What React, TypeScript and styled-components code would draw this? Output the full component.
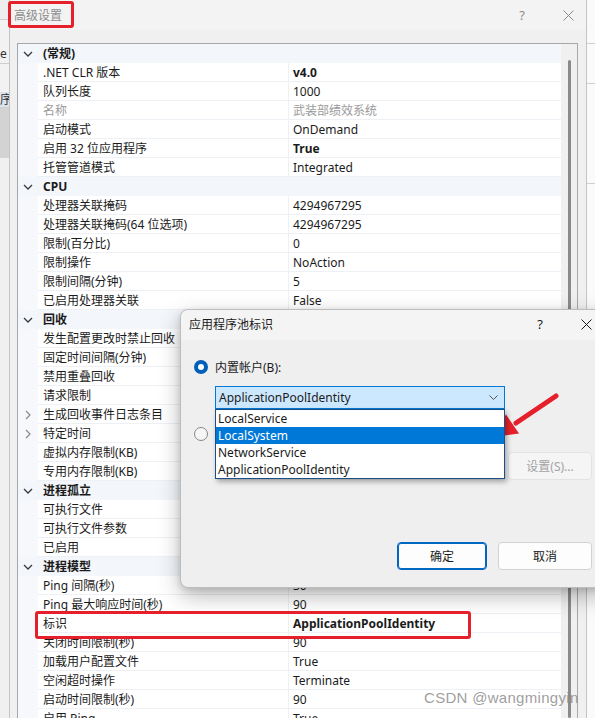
import React from "react";
import styled, { createGlobalStyle, css } from "styled-components";

const FONT = `"Noto Sans", "Noto Sans CJK SC", sans-serif`;

const GlobalStyle = createGlobalStyle`
  html, body { margin: 0; padding: 0; background: #f0f0f0; }
  body { width: 595px; height: 718px; overflow: hidden; font-family: ${FONT}; }
  * { box-sizing: border-box; }
`;

type Row =
  | { kind: "cat"; label: string }
  | { kind: "prop"; name: string; value: string; bold?: boolean; dim?: boolean; expand?: boolean };

/* values of rows lying under the dialog are not visible in the screenshot */
const rows: Row[] = [
  { kind: "cat", label: "(常规)" },
  { kind: "prop", name: ".NET CLR 版本", value: "v4.0", bold: true },
  { kind: "prop", name: "队列长度", value: "1000" },
  { kind: "prop", name: "名称", value: "武装部绩效系统", dim: true },
  { kind: "prop", name: "启动模式", value: "OnDemand" },
  { kind: "prop", name: "启用 32 位应用程序", value: "True", bold: true },
  { kind: "prop", name: "托管管道模式", value: "Integrated" },
  { kind: "cat", label: "CPU" },
  { kind: "prop", name: "处理器关联掩码", value: "4294967295" },
  { kind: "prop", name: "处理器关联掩码(64 位选项)", value: "4294967295" },
  { kind: "prop", name: "限制(百分比)", value: "0" },
  { kind: "prop", name: "限制操作", value: "NoAction" },
  { kind: "prop", name: "限制间隔(分钟)", value: "5" },
  { kind: "prop", name: "已启用处理器关联", value: "False" },
  { kind: "cat", label: "回收" },
  { kind: "prop", name: "发生配置更改时禁止回收", value: "" },
  { kind: "prop", name: "固定时间间隔(分钟)", value: "" },
  { kind: "prop", name: "禁用重叠回收", value: "" },
  { kind: "prop", name: "请求限制", value: "" },
  { kind: "prop", name: "生成回收事件日志条目", value: "", expand: true },
  { kind: "prop", name: "特定时间", value: "", expand: true },
  { kind: "prop", name: "虚拟内存限制(KB)", value: "" },
  { kind: "prop", name: "专用内存限制(KB)", value: "" },
  { kind: "cat", label: "进程孤立" },
  { kind: "prop", name: "可执行文件", value: "" },
  { kind: "prop", name: "可执行文件参数", value: "" },
  { kind: "prop", name: "已启用", value: "" },
  { kind: "cat", label: "进程模型" },
  { kind: "prop", name: "Ping 间隔(秒)", value: "30" },
  { kind: "prop", name: "Ping 最大响应时间(秒)", value: "90" },
  { kind: "prop", name: "标识", value: "ApplicationPoolIdentity", bold: true },
  { kind: "prop", name: "关闭时间限制(秒)", value: "90" },
  { kind: "prop", name: "加载用户配置文件", value: "True" },
  { kind: "prop", name: "空闲超时操作", value: "Terminate" },
  { kind: "prop", name: "启动时间限制(秒)", value: "90" },
  { kind: "prop", name: "启用 Ping", value: "True" },
];

/* ---------- page ---------- */

const Screen = styled.div`
  position: relative;
  width: 595px;
  height: 718px;
  overflow: hidden;
  display: flex;
  background: #f0f0f0;
  font-family: ${FONT};
  font-size: 12px;
  color: #1b1b1b;
`;

const SideStrip = styled.div<{ $w: number }>`
  width: ${(p) => p.$w}px;
  flex: none;
  display: flex;
  flex-direction: column;
  background: #eeeeee;
  overflow: hidden;
`;

const StripBand = styled.div<{ $h: number; $bg?: string; $line?: boolean }>`
  height: ${(p) => p.$h}px;
  flex: none;
  background: ${(p) => p.$bg || "transparent"};
  border-bottom: ${(p) => (p.$line ? "1px solid #cfcfcf" : "none")};
  font-size: 12px;
  line-height: ${(p) => p.$h}px;
  white-space: nowrap;
  overflow: hidden;
  color: #333;
`;

const MainWindow = styled.div`
  flex: 1;
  display: flex;
  flex-direction: column;
  background: #f0f0f0;
  border-left: 1px solid #c4c4c4;
  border-right: 1px solid #c4c4c4;
  min-width: 0;
`;

const TitleBar = styled.div`
  height: 30px;
  flex: none;
  display: flex;
  align-items: center;
  padding-left: 4px;
  background: #f3f3f3;
`;

const TitleText = styled.div<{ $active?: boolean }>`
  font-size: 12px;
  color: ${(p) => (p.$active ? "#1b1b1b" : "#8c8c8c")};
  flex: 1;
`;

const CaptionButton = styled.div<{ $w: number; $active?: boolean }>`
  width: ${(p) => p.$w}px;
  height: 100%;
  display: flex;
  align-items: center;
  justify-content: center;
  color: ${(p) => (p.$active ? "#1b1b1b" : "#8c8c8c")};
  font-size: 13px;
`;

const GridArea = styled.div`
  flex: 1;
  display: flex;
  padding: 13px 8px 0 7px;
  min-height: 0;
`;

const GridFrame = styled.div`
  flex: 1;
  display: flex;
  border: 1px solid #a8a8a8;
  border-bottom: none;
  background: #ffffff;
  overflow: hidden;
`;

const RowsBox = styled.div`
  flex: 1;
  display: flex;
  flex-direction: column;
  min-width: 0;
`;

const GridRow = styled.div<{ $cat?: boolean }>`
  height: 19px;
  flex: none;
  display: grid;
  grid-template-columns: 20px 251px 1fr;
  border-bottom: 1px solid ${(p) => (p.$cat ? "#f3f6fa" : "#edf0f4")};
  background: ${(p) => (p.$cat ? "#f3f6fa" : "#ffffff")};
`;

const Gutter = styled.div<{ $cat?: boolean }>`
  display: flex;
  align-items: center;
  justify-content: center;
  padding-top: 1px;
  background: ${(p) => (p.$cat ? "#f3f6fa" : "#f6f8fb")};
  margin-bottom: -1px;
`;

const cellText = css`
  padding-top: 2px;
  line-height: 16px;
  white-space: nowrap;
  overflow: hidden;
`;

const NameCell = styled.div<{ $dim?: boolean }>`
  ${cellText};
  padding-left: 5px;
  color: ${(p) => (p.$dim ? "#9a9a9a" : "#1b1b1b")};
  border-right: 1px solid #edf0f4;
`;

const CatLabel = styled.div`
  ${cellText};
  grid-column: 2 / 4;
  padding-left: 5px;
  font-weight: 700;
  color: #1b1b1b;
`;

const ValueCell = styled.div<{ $bold?: boolean; $dim?: boolean }>`
  ${cellText};
  padding-left: 4px;
  font-weight: ${(p) => (p.$bold ? 700 : 400)};
  color: ${(p) => (p.$dim ? "#9a9a9a" : "#1b1b1b")};
`;

const ScrollTrack = styled.div`
  width: 16px;
  flex: none;
  background: #f0f0f0;
  display: flex;
  justify-content: center;
  padding-top: 16px;
`;

const ScrollThumb = styled.div`
  width: 3px;
  height: 100%;
  border-radius: 2px;
  background: #8a8a8a;
`;

/* ---------- dialog ---------- */

const Dialog = styled.div`
  position: absolute;
  left: 180px;
  top: 309px;
  width: 430px;
  display: flex;
  flex-direction: column;
  border: 1px solid #bdbdbd;
  border-radius: 8px;
  background: #efefef;
  box-shadow: 0 8px 22px rgba(0, 0, 0, 0.28), 0 2px 6px rgba(0, 0, 0, 0.12);
`;

const DialogTitleBar = styled.div`
  height: 30px;
  display: flex;
  align-items: center;
  padding: 0 0 2px 8px;
  background: #f4f4f4;
  border-radius: 8px 8px 0 0;
`;

const DialogBody = styled.div`
  display: flex;
  flex-direction: column;
  padding: 17px 17px 17px 13px;
`;

const RadioRow = styled.div<{ $mt?: number }>`
  height: 20px;
  margin-top: ${(p) => p.$mt || 0}px;
  display: flex;
  align-items: center;
  gap: 7px;
  font-size: 12px;
`;

const RadioDot = styled.span<{ $checked?: boolean }>`
  width: 14px;
  height: 14px;
  border-radius: 50%;
  flex: none;
  display: flex;
  align-items: center;
  justify-content: center;
  ${(p) =>
    p.$checked
      ? css`
          background: #005fb8;
          &::after {
            content: "";
            width: 6px;
            height: 6px;
            border-radius: 50%;
            background: #ffffff;
          }
        `
      : css`
          background: #f6f6f6;
          border: 1px solid #878787;
        `}
`;

const Indent = styled.div<{ $mt?: number }>`
  margin-left: 21px;
  margin-top: ${(p) => p.$mt || 0}px;
  display: flex;
  gap: 6px;
  position: relative;
`;

const Combo = styled.div`
  position: relative;
  width: 290px;
  height: 23px;
  display: flex;
  align-items: center;
  padding: 0 6px 0 3px;
  background: #cce8ff;
  border: 1px solid #0078d4;
  font-size: 12px;
`;

const ComboText = styled.span`
  flex: 1;
`;

const DropList = styled.div`
  position: absolute;
  left: -1px;
  top: 22px;
  width: 290px;
  background: #ffffff;
  border: 1px solid #1c4f86;
  box-shadow: 2px 3px 5px rgba(0, 0, 0, 0.3);
  z-index: 2;
`;

const DropItem = styled.div<{ $sel?: boolean }>`
  height: 17px;
  line-height: 17px;
  padding-left: 2px;
  font-size: 12px;
  background: ${(p) => (p.$sel ? "#0078d7" : "transparent")};
  color: ${(p) => (p.$sel ? "#ffffff" : "#1b1b1b")};
`;

const TextField = styled.div`
  width: 287px;
  height: 28px;
  background: #fbfbfb;
  border: 1px solid #e2e2e2;
  border-radius: 4px;
`;

const WinButton = styled.div<{ $w: number; $primary?: boolean; $disabled?: boolean }>`
  width: ${(p) => p.$w}px;
  height: 28px;
  display: flex;
  align-items: center;
  justify-content: center;
  border-radius: 4px;
  font-size: 12px;
  background: ${(p) => (p.$disabled ? "#f5f5f5" : "#fdfdfd")};
  color: ${(p) => (p.$disabled ? "#a3a3a3" : "#1b1b1b")};
  border: 1px solid ${(p) => (p.$primary ? "#0067c0" : p.$disabled ? "#e3e3e3" : "#d2d2d2")};
  ${(p) =>
    p.$primary &&
    css`
      box-shadow: inset 0 0 0 1px #0067c0;
    `}
`;

const ButtonRow = styled.div`
  margin-top: 62px;
  display: flex;
  justify-content: flex-end;
  gap: 11px;
`;

/* ---------- annotations ---------- */

const RedBox = styled.div<{ $x: number; $y: number; $w: number; $h: number }>`
  position: absolute;
  left: ${(p) => p.$x}px;
  top: ${(p) => p.$y}px;
  width: ${(p) => p.$w}px;
  height: ${(p) => p.$h}px;
  border: 3px solid #e5202b;
  border-radius: 3px;
  pointer-events: none;
`;

const ArrowSvg = styled.svg`
  position: absolute;
  left: 480px;
  top: 380px;
  width: 90px;
  height: 70px;
  overflow: visible;
`;

const Watermark = styled.div`
  position: absolute;
  left: 424px;
  top: 689px;
  font-family: "Liberation Sans", Arial, sans-serif;
  font-size: 15px;
  letter-spacing: 0.3px;
  color: rgba(140, 140, 140, 0.85);
  white-space: nowrap;
`;

const Chevron = ({ right }: { right?: boolean }) =>
  right ? (
    <svg width="6" height="10" viewBox="0 0 6 10">
      <polyline points="1,1 5,5 1,9" fill="none" stroke="#8a8a8a" strokeWidth="1.2" />
    </svg>
  ) : (
    <svg width="10" height="6" viewBox="0 0 10 6">
      <polyline points="1,1 5,5 9,1" fill="none" stroke="#3a3a3a" strokeWidth="1.3" />
    </svg>
  );

const CloseIcon = ({ color }: { color: string }) => (
  <svg width="11" height="11" viewBox="0 0 11 11">
    <path d="M0.5 0.5 L10.5 10.5 M10.5 0.5 L0.5 10.5" stroke={color} strokeWidth="1" fill="none" />
  </svg>
);

const ComboChevron = () => (
  <svg width="9" height="5" viewBox="0 0 9 5">
    <polyline points="0.5,0.5 4.5,4.5 8.5,0.5" fill="none" stroke="#555" strokeWidth="1" />
  </svg>
);

export default function App() {
  return (
    <>
      <GlobalStyle />
      <Screen>
        <SideStrip $w={9}>
          <StripBand $h={20} $bg="#eeeeee" $line />
          <StripBand $h={24} $bg="#f2f2f2" />
          <StripBand $h={20} $bg="#f2f2f2" $line>e</StripBand>
          <StripBand $h={28} $bg="#f2f2f2" />
          <StripBand $h={16} $bg="#dbe3ee" $line>序</StripBand>
          <StripBand $h={50} $bg="#d3d3d3" />
          <StripBand $h={600} $bg="#f0f0f0" />
        </SideStrip>

        <MainWindow>
          <TitleBar>
            <TitleText>高级设置</TitleText>
            <CaptionButton $w={46}>?</CaptionButton>
            <CaptionButton $w={5} />
            <CaptionButton $w={36}>
              <CloseIcon color="#8c8c8c" />
            </CaptionButton>
          </TitleBar>
          <GridArea>
            <GridFrame>
              <RowsBox>
                {rows.map((r, i) =>
                  r.kind === "cat" ? (
                    <GridRow key={i} $cat>
                      <Gutter $cat>
                        <Chevron />
                      </Gutter>
                      <CatLabel>{r.label}</CatLabel>
                    </GridRow>
                  ) : (
                    <GridRow key={i}>
                      <Gutter>{r.expand && <Chevron right />}</Gutter>
                      <NameCell $dim={r.dim}>{r.name}</NameCell>
                      <ValueCell $bold={r.bold} $dim={r.dim}>
                        {r.value}
                      </ValueCell>
                    </GridRow>
                  )
                )}
              </RowsBox>
              <ScrollTrack>
                <ScrollThumb />
              </ScrollTrack>
            </GridFrame>
          </GridArea>
        </MainWindow>

        <SideStrip $w={8}>
          <StripBand $h={44} $bg="#fafafa" $line />
          <StripBand $h={40} $bg="#fafafa" $line />
          <StripBand $h={100} $bg="#fafafa" $line />
          <StripBand $h={534} $bg="#fafafa" />
        </SideStrip>

        <Dialog>
          <DialogTitleBar>
            <TitleText $active>应用程序池标识</TitleText>
            <CaptionButton $w={46} $active>
              ?
            </CaptionButton>
            <CaptionButton $w={10} />
            <CaptionButton $w={26} $active>
              <CloseIcon color="#1b1b1b" />
            </CaptionButton>
            <CaptionButton $w={10} />
          </DialogTitleBar>
          <DialogBody>
            <RadioRow>
              <RadioDot $checked />
              <span>内置帐户(B):</span>
            </RadioRow>
            <Indent $mt={9}>
              <Combo>
                <ComboText>ApplicationPoolIdentity</ComboText>
                <ComboChevron />
                <DropList>
                  <DropItem>LocalService</DropItem>
                  <DropItem $sel>LocalSystem</DropItem>
                  <DropItem>NetworkService</DropItem>
                  <DropItem>ApplicationPoolIdentity</DropItem>
                </DropList>
              </Combo>
            </Indent>
            <RadioRow $mt={15}>
              <RadioDot />
              <span>自定义帐户(C):</span>
            </RadioRow>
            <Indent $mt={8}>
              <TextField />
              <WinButton $w={84} $disabled>
                设置(S)...
              </WinButton>
            </Indent>
            <ButtonRow>
              <WinButton $w={90} $primary>
                确定
              </WinButton>
              <WinButton $w={94}>取消</WinButton>
            </ButtonRow>
          </DialogBody>
        </Dialog>

        <RedBox $x={8} $y={1} $w={66} $h={27} />
        <RedBox $x={35} $y={611} $w={436} $h={28} />

        <ArrowSvg viewBox="0 0 90 70">
          <line x1="76" y1="16" x2="36" y2="43" stroke="#e5202b" strokeWidth="5" strokeLinecap="round" />
          <polygon points="13,57 26,34.5 39,53.5" fill="#e5202b" />
        </ArrowSvg>

        <Watermark>CSDN @wangmingyin</Watermark>
      </Screen>
    </>
  );
}
